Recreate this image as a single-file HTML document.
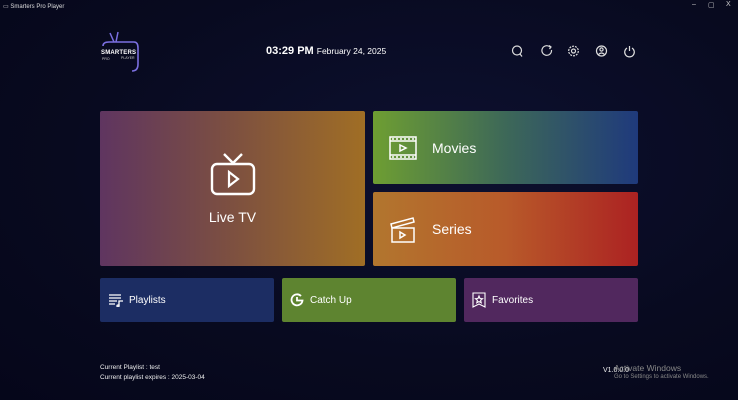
<!DOCTYPE html>
<html><head><meta charset="utf-8"><style>
*{margin:0;padding:0;box-sizing:border-box}
body{width:738px;height:400px;overflow:hidden;background:radial-gradient(ellipse at 60% 40%,#0d1030 0%,#080a1f 60%,#05061a 100%);font-family:"Liberation Sans",sans-serif;color:#fff;position:relative}
.a{position:absolute}
.tile{position:absolute;border-radius:2px;display:flex;align-items:center}
svg{display:block}
</style></head><body>
<div class="a" style="left:3px;top:3px;font-size:6px;color:#ddd">▭ Smarters Pro Player</div>
<div class="a" style="left:692px;top:1px;font-size:7px;color:#ccc">–</div>
<div class="a" style="left:708px;top:1px;font-size:7px;color:#ccc">▢</div>
<div class="a" style="left:726px;top:1px;font-size:7px;color:#ccc">X</div>

<svg class="a" style="left:99px;top:31px" width="42" height="42" viewBox="0 0 42 42">
<path d="M11 2 L15 11 M19 1 L17 11" stroke="#7b6fe0" stroke-width="1.5" fill="none"/>
<path d="M4 15 Q4 11 10 11 L35 11 Q39 11 39 17 L39 33 Q39 40 33 40" stroke="#7b6fe0" stroke-width="1.6" fill="none"/>
<text x="2" y="23" font-size="6" font-weight="bold" fill="#fff" font-family="Liberation Sans" textLength="35">SMARTERS</text>
<text x="3" y="29" font-size="3.5" fill="#ccc" font-family="Liberation Sans">PRO</text>
<text x="22" y="28" font-size="3.5" fill="#ccc" font-family="Liberation Sans">PLAYER</text>
</svg>

<div class="a" style="left:266px;top:45px;font-size:11px;font-weight:bold">03:29 PM <span style="font-size:8.5px;font-weight:normal">February 24, 2025</span></div>

<svg class="a" style="left:510px;top:44px" width="130" height="14" viewBox="0 0 130 14" fill="none" stroke="#ddd" stroke-width="1.2">
<circle cx="7" cy="6.5" r="4.5"/><path d="M10 10 L12 12.5"/>
<path d="M40 3 A4.8 4.8 0 1 0 41.5 6"/><path d="M39 1.5 L41 3 L39.5 5"/>
<circle cx="63.5" cy="7" r="2"/><circle cx="63.5" cy="7" r="4.8" stroke-dasharray="2 1"/>
<circle cx="91.5" cy="7" r="5"/><circle cx="91.5" cy="5.5" r="1.6"/><path d="M88.5 10.5 Q91.5 7.5 94.5 10.5"/>
<path d="M117 4 A4.8 4.8 0 1 0 122 4"/><path d="M119.5 2 L119.5 7"/>
</svg>

<div class="tile" style="left:100px;top:111px;width:265px;height:155px;background:linear-gradient(90deg,#5f3560,#7d5040 50%,#a06e25);flex-direction:column;justify-content:center">
<svg width="46" height="44" viewBox="0 0 46 44" fill="none" stroke="#fff" stroke-width="2.4"><path d="M14 2 L23 11 L32 2"/><rect x="2" y="12" width="42" height="30" rx="5"/><path d="M19 20 L28 27 L19 34 Z" stroke-width="2.2"/></svg>
<div style="font-size:14px;margin-top:13px">Live TV</div>
</div>
<div class="tile" style="left:373px;top:111px;width:265px;height:73px;background:linear-gradient(90deg,#6e9e32,#3d6858 50%,#1f3a7c)">
<svg style="margin-left:16px" width="28" height="24" viewBox="0 0 28 24" fill="none" stroke="#fff" stroke-width="1.5"><rect x="1" y="1" width="26" height="22"/><path d="M1 5 H27 M1 19 H27" /><path d="M3 3h2M7 3h2M11 3h2M15 3h2M19 3h2M23 3h2M3 21h2M7 21h2M11 21h2M15 21h2M19 21h2M23 21h2"/><path d="M11 9 L17 12 L11 15 Z"/></svg>
<div style="font-size:14px;margin-left:15px">Movies</div>
</div>
<div class="tile" style="left:373px;top:192px;width:265px;height:74px;background:linear-gradient(90deg,#b2762e,#b85a2a 50%,#ac2222)">
<svg style="margin-left:16px" width="28" height="28" viewBox="0 0 28 28" fill="none" stroke="#fff" stroke-width="1.5"><path d="M2 9 L24 3 L25 7 L3 13 Z"/><rect x="3" y="13" width="22" height="14"/><path d="M11 17 L16 20 L11 23 Z"/></svg>
<div style="font-size:14px;margin-left:15px">Series</div>
</div>
<div class="tile" style="left:100px;top:278px;width:174px;height:44px;background:#1c2d63">
<svg style="margin-left:8px" width="16" height="14" viewBox="0 0 16 14" fill="none" stroke="#fff" stroke-width="1.3"><path d="M1 2H13M1 5H13M1 8H9M1 11H7"/><path d="M11 13V8H15"/><circle cx="10" cy="13" r="1"/></svg>
<div style="font-size:10px;margin-left:5px">Playlists</div>
</div>
<div class="tile" style="left:282px;top:278px;width:174px;height:44px;background:#5e8430">
<svg style="margin-left:8px" width="14" height="14" viewBox="0 0 14 14" fill="none" stroke="#fff" stroke-width="1.8"><path d="M11 3 A5.5 5.5 0 1 0 12.5 7.5 H7 V4"/></svg>
<div style="font-size:10px;margin-left:6px">Catch Up</div>
</div>
<div class="tile" style="left:464px;top:278px;width:174px;height:44px;background:#51285e">
<svg style="margin-left:8px" width="14" height="16" viewBox="0 0 14 16" fill="none" stroke="#fff" stroke-width="1.1"><path d="M1 1H13V15L7 12L1 15Z"/><path d="M7 4L8 6.5L10.5 6.7L8.6 8.3L9.2 10.8L7 9.5L4.8 10.8L5.4 8.3L3.5 6.7L6 6.5Z"/></svg>
<div style="font-size:10px;margin-left:6px">Favorites</div>
</div>

<div class="a" style="left:100px;top:363px;font-size:6.5px;line-height:10px;color:#eee">Current Playlist : test<br>Current playlist expires : 2025-03-04</div>
<div class="a" style="left:603px;top:367px;font-size:7px;color:#eee">V1.0.0.0</div>
<div class="a" style="left:614px;top:363px;font-size:8.5px;color:#888">Activate Windows</div>
<div class="a" style="left:614px;top:374px;font-size:6px;color:#888">Go to Settings to activate Windows.</div>
</body></html>
